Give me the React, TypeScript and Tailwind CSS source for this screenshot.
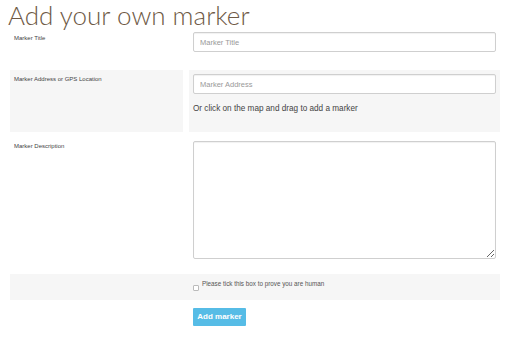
export default function App() {
  return (
    <div className="h-[340px] w-[510px] overflow-hidden bg-white font-['Liberation_Sans',Arial,sans-serif] text-[#333]">
      <h1 className="pl-[8px] pt-[1px] font-['Lato',sans-serif] text-[26px] font-light leading-[28px] text-[#6e5945]">
        Add your own marker
      </h1>

      <div className="ml-[10px] mr-[10px] mt-[2px] w-[490px]">
        {/* title */}
        <div className="flex h-[39px] gap-[6px]">
          <div className="w-[173px] pl-[4px] pt-[3px] text-[6px] leading-[8px] text-[#444]">Marker Title</div>
          <div className="flex-1 px-[4px] pt-[1px]">
            <input
              placeholder="Marker Title"
              className="block h-[20px] w-full rounded-[2px] border border-[#cfcfcf] px-[6px] text-[7.5px] shadow-[inset_0_1px_1px_rgba(0,0,0,0.06)] outline-none placeholder:text-[#999]"
            />
          </div>
        </div>

        {/* address */}
        <div className="flex h-[62px] gap-[6px]">
          <div className="w-[173px] bg-[#f6f6f6] pl-[4px] pt-[5px] text-[6px] leading-[8px] text-[#444]">
            Marker Address or GPS Location
          </div>
          <div className="flex-1 bg-[#f6f6f6] px-[4px] pt-[4px]">
            <input
              placeholder="Marker Address"
              className="block h-[20px] w-full rounded-[2px] border border-[#cfcfcf] bg-white px-[6px] text-[7.5px] shadow-[inset_0_1px_1px_rgba(0,0,0,0.06)] outline-none placeholder:text-[#999]"
            />
            <p className="mt-[10px] text-[8.2px] leading-[10px] text-[#444]">Or click on the map and drag to add a marker</p>
          </div>
        </div>

        {/* description */}
        <div className="flex h-[142px] gap-[6px]">
          <div className="w-[173px] pl-[4px] pt-[10px] text-[6px] leading-[8px] text-[#444]">Marker Description</div>
          <div className="flex-1 px-[4px] pt-[9px]">
            <textarea className="block h-[118px] w-full resize-y rounded-[2px] border border-[#cfcfcf] shadow-[inset_0_1px_1px_rgba(0,0,0,0.06)] outline-none" />
          </div>
        </div>

        {/* captcha */}
        <div className="flex h-[26px] bg-[#f6f6f6]">
          <div className="ml-[183px] flex items-start gap-[3px] pt-[6px]">
            <span className="mt-[5px] h-[6px] w-[6px] rounded-[1px] border border-[#bbb] bg-white" />
            <span className="text-[6.3px] leading-[8px] text-[#555]">Please tick this box to prove you are human</span>
          </div>
        </div>

        {/* submit */}
        <div className="pl-[183px] pt-[8px]">
          <button className="block h-[18px] w-[53px] rounded-[1px] bg-[#56bce6] text-[8px] font-bold leading-[18px] text-white">
            Add marker
          </button>
        </div>
      </div>
    </div>
  );
}
